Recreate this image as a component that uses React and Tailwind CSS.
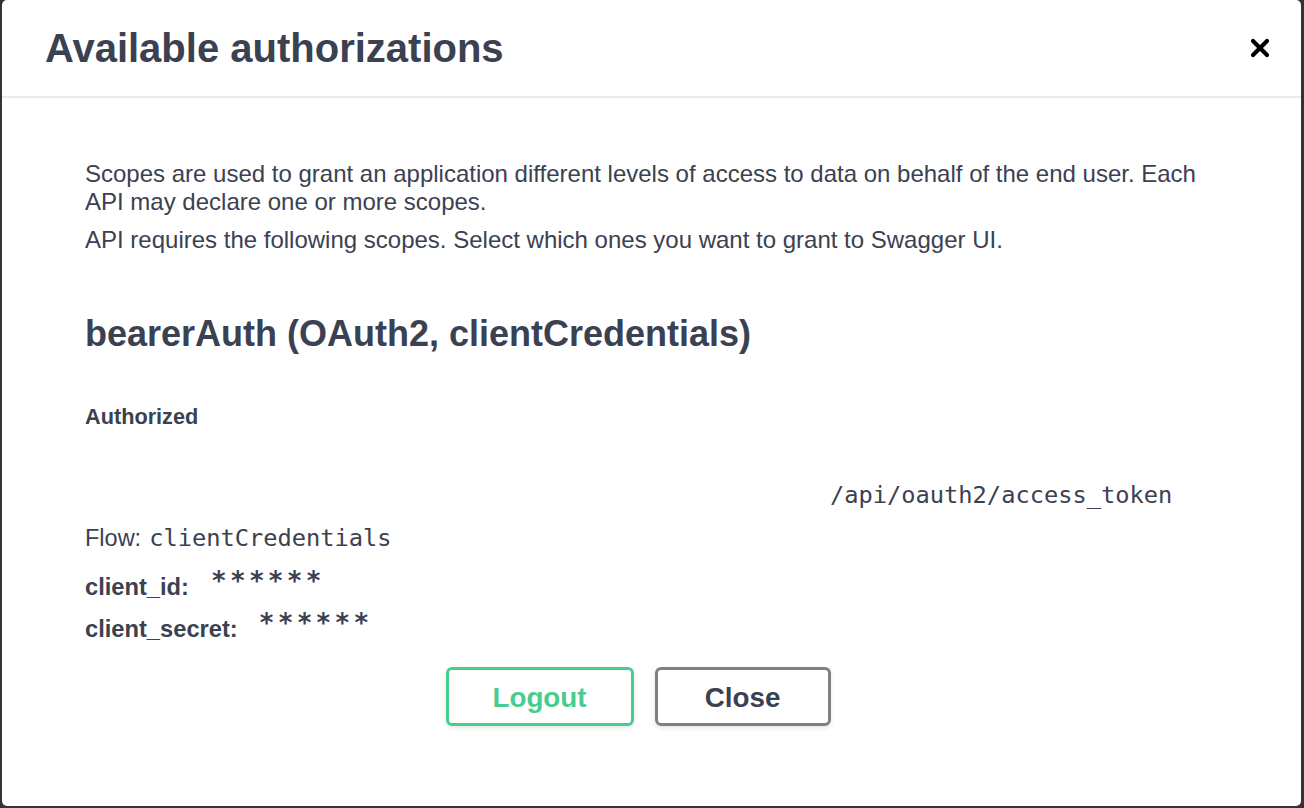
export default function App() {
  const sans = { fontFamily: '"Liberation Sans", Arial, Helvetica, sans-serif' };
  const mono = { fontFamily: '"DejaVu Sans Mono", monospace' };
  return (
    <div className="w-[1304px] h-[808px] bg-[#333333] flex pl-[2px] pr-[3px] pb-[2px]" style={sans}>
      <div className="flex-1 bg-white rounded-[5px] flex flex-col text-[#3b4151] overflow-hidden">
        <div className="h-[98px] shrink-0 flex items-center justify-between pl-[43px] pr-[31px] border-b-2 border-[#ebebeb]">
          <h2 className="text-[40px] leading-[46px] font-bold">Available authorizations</h2>
          <button className="w-[20px] h-[20px] flex items-center justify-center">
            <svg width="20" height="20" viewBox="0 0 20 20">
              <path d="M3 3 L17 17 M17 3 L3 17" stroke="#000" strokeWidth="4.2" strokeLinecap="round" />
            </svg>
          </button>
        </div>
        <div className="pl-[83px] pr-[82px] pt-[62px] flex flex-col">
          <p className="text-[24px] leading-[28px]">
            Scopes are used to grant an application different levels of access to data on behalf of the end user. Each API may declare one or more scopes.
          </p>
          <p className="text-[24px] leading-[28px] mt-[10px]">
            API requires the following scopes. Select which ones you want to grant to Swagger UI.
          </p>
          <h4 className="text-[36px] leading-[42px] font-bold mt-[59px]">bearerAuth (OAuth2, clientCredentials)</h4>
          <h6 className="text-[21.7px] leading-[26px] font-bold mt-[49px]">Authorized</h6>
          <div className="mt-[50px] h-[30px] flex items-center pl-[745px]">
            <code className="text-[23.7px] leading-[30px] whitespace-nowrap" style={mono}>/api/oauth2/access_token</code>
          </div>
          <div className="mt-[13px] h-[30px] flex items-center">
            <span className="text-[23.5px] leading-[30px]">Flow:</span>
            <code className="ml-[8px] text-[23.7px] leading-[30px]" style={mono}>clientCredentials</code>
          </div>
          <div className="mt-[19px] h-[30px] flex items-center">
            <span className="text-[23.7px] leading-[30px] font-bold">client_id:</span>
            <code className="ml-[22px] mb-[13px] text-[26px] leading-[30px] font-bold tracking-[3.3px]" style={mono}>******</code>
          </div>
          <div className="mt-[12px] h-[30px] flex items-center">
            <span className="text-[23.7px] leading-[30px] font-bold">client_secret:</span>
            <code className="ml-[21px] mb-[13px] text-[26px] leading-[30px] font-bold tracking-[3.3px]" style={mono}>******</code>
          </div>
          <div className="mt-[23px] flex justify-center">
            <button className="w-[188px] h-[59px] border-[3px] border-[#49cc90] rounded-[6px] text-[#49cc90] text-[27.8px] leading-[32px] pt-[2px] font-bold shadow-[0_2px_4px_rgba(0,0,0,0.1)] mr-[21px]">Logout</button>
            <button className="w-[176px] h-[59px] border-[3px] border-[#808080] rounded-[6px] text-[#3b4151] text-[27.8px] leading-[32px] pt-[2px] font-bold shadow-[0_2px_4px_rgba(0,0,0,0.1)] mr-[28px]">Close</button>
          </div>
        </div>
      </div>
    </div>
  );
}
